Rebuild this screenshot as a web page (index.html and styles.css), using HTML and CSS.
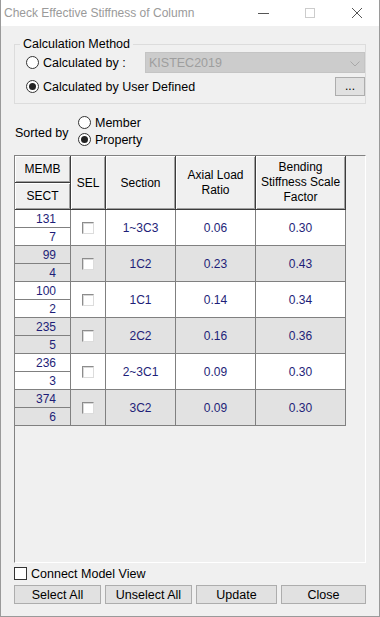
FILE: index.html
```html
<!DOCTYPE html>
<html>
<head>
<meta charset="utf-8">
<link rel="stylesheet" href="styles.css">
</head>
<body>
<div class="win">
  <div class="titlebar">
    <div class="title">Check Effective Stiffness of Column</div>
    <div class="tb-btn"><svg width="12" height="12" viewBox="0 0 12 12"><line x1="0" y1="6.5" x2="11" y2="6.5" stroke="#555" stroke-width="1"/></svg></div>
    <div class="tb-btn"><svg width="12" height="12" viewBox="0 0 12 12"><rect x="1.5" y="1.5" width="9" height="9" fill="none" stroke="#ccc" stroke-width="1"/></svg></div>
    <div class="tb-btn"><svg width="12" height="12" viewBox="0 0 12 12"><path d="M1 1 L11 11 M11 1 L1 11" stroke="#555" stroke-width="1" fill="none"/></svg></div>
  </div>
  <div class="content">
    <div class="group">
      <span class="legend">Calculation Method</span>
      <div class="grow r1">
        <span class="radio"></span><span class="lbl">Calculated by :</span>
        <div class="combo"><span class="combo-text">KISTEC2019</span><svg class="chev" width="10" height="6" viewBox="0 0 10 6"><path d="M0.5 0.5 L5 5 L9.5 0.5" fill="none" stroke="#a8a8a8" stroke-width="1"/></svg></div>
      </div>
      <div class="grow r2">
        <span class="radio on"></span><span class="lbl">Calculated by User Defined</span>
        <div class="btn dots">...</div>
      </div>
    </div>
    <div class="sort">
      <div class="sort-lbl">Sorted by</div>
      <div class="sort-opts">
        <div class="sopt"><span class="radio"></span><span class="lbl2">Member</span></div>
        <div class="sopt"><span class="radio on"></span><span class="lbl2">Property</span></div>
      </div>
    </div>
    <div class="frame">
      <div class="grid">
        <div class="hc">MEMB</div>
        <div class="hc span2">SEL</div>
        <div class="hc span2">Section</div>
        <div class="hc span2 ml">Axial Load<br>Ratio</div>
        <div class="hc span2 ml">Bending<br>Stiffness Scale<br>Factor</div>
        <div class="hc">SECT</div>

        <div class="c num">131</div><div class="c span2"><span class="cb"></span></div><div class="c span2">1~3C3</div><div class="c span2">0.06</div><div class="c span2">0.30</div><div class="c num">7</div>
        <div class="c num alt">99</div><div class="c span2 alt"><span class="cb"></span></div><div class="c span2 alt">1C2</div><div class="c span2 alt">0.23</div><div class="c span2 alt">0.43</div><div class="c num alt">4</div>
        <div class="c num">100</div><div class="c span2"><span class="cb"></span></div><div class="c span2">1C1</div><div class="c span2">0.14</div><div class="c span2">0.34</div><div class="c num">2</div>
        <div class="c num alt">235</div><div class="c span2 alt"><span class="cb"></span></div><div class="c span2 alt">2C2</div><div class="c span2 alt">0.16</div><div class="c span2 alt">0.36</div><div class="c num alt">5</div>
        <div class="c num">236</div><div class="c span2"><span class="cb"></span></div><div class="c span2">2~3C1</div><div class="c span2">0.09</div><div class="c span2">0.30</div><div class="c num">3</div>
        <div class="c num alt">374</div><div class="c span2 alt"><span class="cb"></span></div><div class="c span2 alt">3C2</div><div class="c span2 alt">0.09</div><div class="c span2 alt">0.30</div><div class="c num alt">6</div>
      </div>
    </div>
    <div class="cmv"><span class="chk"></span><span class="lbl">Connect Model View</span></div>
    <div class="btns">
      <div class="btn b1">Select All</div>
      <div class="btn b2">Unselect All</div>
      <div class="btn b3">Update</div>
      <div class="btn b4">Close</div>
    </div>
  </div>
</div>
</body>
</html>
```
FILE: styles.css
```css
html, body { margin: 0; padding: 0; }
body { background: #f0f0f0; font-family: "Liberation Sans", Arial, sans-serif; }
.win {
  width: 380px; height: 617px; box-sizing: border-box;
  border: 1px solid #9a9a9a; border-top: none;
  background: #f0f0f0; display: flex; flex-direction: column;
}
.titlebar {
  height: 26px; background: #fff; display: flex; align-items: center;
  padding-left: 3px; font-size: 12px; color: #9a9a9a; flex: none;
}
.title { flex: 1; margin-top: -1px; }
.tb-btn { width: 46px; height: 26px; display: flex; align-items: center; justify-content: center; }
.tb-btn:last-child { padding-left: 2px; box-sizing: border-box; }
.tb-btn svg { display: block; }
.content { padding: 0 13px 0 13px; display: flex; flex-direction: column; font-size: 12.5px; color: #000; }
.group {
  margin-top: 18px; height: 60px; box-sizing: border-box;
  border: 1px solid #dcdcdc; position: relative; padding-left: 11px;
}
.legend {
  position: absolute; top: -9px; left: 5px; padding: 0 3px;
  background: #f0f0f0; line-height: 16px;
}
.grow { display: flex; align-items: center; }
.r1 { margin-top: 7px; height: 21px; }
.r2 { margin-top: 4px; height: 19px; }
.radio {
  width: 13px; height: 13px; box-sizing: border-box; border: 1px solid #333;
  border-radius: 50%; background: #fff; position: relative; flex: none;
}
.radio.on::after {
  content: ""; position: absolute; left: 2px; top: 2px; width: 7px; height: 7px;
  border-radius: 50%; background: #222;
}
.lbl { margin-left: 4px; }
.combo {
  margin-left: auto; width: 220px; height: 21px; box-sizing: border-box;
  background: #cccccc; border: 1px solid #c4c4c4; display: flex; align-items: center;
  color: #9e9e9e; padding-left: 3px;
}
.combo-text { flex: 1; }
.chev { margin-right: 4px; margin-top: 2px; }
.btn {
  height: 19px; box-sizing: border-box; background: #e1e1e1; border: 1px solid #adadad;
  display: flex; align-items: center; justify-content: center;
}
.dots { margin-left: auto; width: 30px; font-size: 12px; padding-bottom: 2px; }
.sort { margin-top: 10px; display: flex; height: 34px; }
.sort-lbl { width: 63px; padding-left: 1px; display: flex; align-items: center; padding-top: 3px; }
.sort-opts { display: flex; flex-direction: column; }
.sopt { height: 17px; display: flex; align-items: center; }
.lbl2 { margin-left: 4px; }
.frame {
  margin-top: 7px; height: 408px; box-sizing: border-box;
  border: 1px solid #fff; border-top-color: #828282; border-left-color: #828282;
  background: #f0f0f0;
}
.grid {
  display: grid;
  grid-template-columns: 56px 35px 70px 80px 90px;
  grid-template-rows: 27px 27px repeat(12, 18px);
  font-size: 12px;
}
.hc {
  box-sizing: border-box; background: #f0f0f0; color: #000;
  border-right: 1px solid #3c3c3c; border-bottom: 1px solid #3c3c3c;
  box-shadow: inset 1px 1px #fff, inset -1px -1px #a0a0a0;
  display: flex; align-items: center; justify-content: center; text-align: center;
}
.hc.ml { line-height: 15px; }
.span2 { grid-row: span 2; }
.c {
  box-sizing: border-box; background: #fff; color: #1e1e78;
  border-right: 1px solid #808080; border-bottom: 1px solid #808080;
  display: flex; align-items: center; justify-content: center;
}
.c.alt { background: #e2e2e2; }
.c.num { justify-content: flex-end; padding-right: 14px; }
.cb {
  width: 12px; height: 12px; box-sizing: border-box; background: #fff;
  border: 1px solid #8c8c8c; border-right-color: #dcdcdc; border-bottom-color: #dcdcdc;
  box-shadow: inset 1px 1px #d8d8d8;
}
.cmv { margin-top: 4px; height: 13px; display: flex; align-items: center; }
.chk { width: 13px; height: 13px; box-sizing: border-box; border: 1px solid #333; background: #fff; flex: none; }
.btns { margin-top: 5px; display: flex; gap: 4px; }
.b1 { width: 87px; }
.b2 { width: 87px; }
.b3 { width: 81px; }
.b4 { width: 85px; }
```
